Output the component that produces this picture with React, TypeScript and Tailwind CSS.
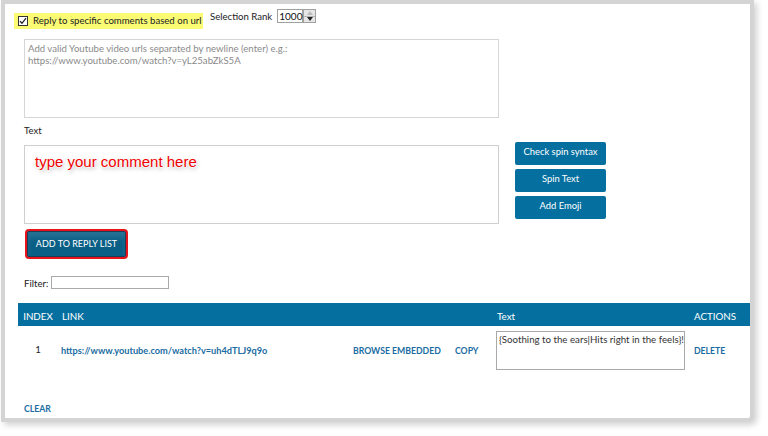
import React from "react";

const ui = { fontFamily: 'Lato, "Open Sans", sans-serif' };

function Check() {
  return (
    <span className="flex h-[10px] w-[10px] items-center justify-center border border-[#333] bg-white">
      <svg width="8" height="8" viewBox="0 0 8 8" fill="none" aria-hidden>
        <path d="M1 4.2 3 6.3 7 1.2" stroke="#222" strokeWidth="1.3" />
      </svg>
    </span>
  );
}

function Spinner() {
  return (
    <div className="flex h-[14px] w-[13px] flex-col border border-[#a0a0a0] bg-[#e6e6e6]">
      <div className="flex flex-1 items-center justify-center border-b border-[#b5b5b5]">
        <svg width="6" height="4" viewBox="0 0 6 4" aria-hidden>
          <path d="M0 4 3 0 6 4Z" fill="#bbb" />
        </svg>
      </div>
      <div className="flex flex-1 items-center justify-center">
        <svg width="6" height="4" viewBox="0 0 6 4" aria-hidden>
          <path d="M0 0 3 4 6 0Z" fill="#222" />
        </svg>
      </div>
    </div>
  );
}

const sideButtons = ["Check spin syntax", "Spin Text", "Add Emoji"];

export default function App() {
  return (
    <div className="h-[436px] w-[768px] overflow-hidden bg-white whitespace-nowrap" style={ui}>
      <div className="ml-[1px] h-[422px] w-[753px] rounded-br-[6px] border-4 border-[#d4d4d4] bg-white shadow-[3px_3px_6px_rgba(0,0,0,0.18)]">
        {/* top row */}
        <div className="flex items-start pl-[9px] pt-[5px]">
          <label className="mt-[4px] flex h-[16px] w-[189px] items-center gap-[5px] bg-[#fbfb74] pl-[4px] text-[9.6px] text-[#222]">
            <Check />
            Reply to specific comments based on url
          </label>
          <span className="ml-[7px] mt-[1px] text-[9.6px] text-[#222]">Selection Rank</span>
          <div className="ml-[5px] flex">
            <div className="flex h-[14px] w-[26px] items-center border border-[#a0a0a0] pl-[1px] text-[10px] text-[#111]">
              1000
            </div>
            <Spinner />
          </div>
        </div>

        <div className="pl-[19px]">
          <div className="mt-[10px] h-[79px] w-[475px] border border-[#d6d6d6] px-[3px] pt-[3px] text-[9.6px] leading-[12px] text-[#8a8a8a]">
            Add valid Youtube video urls separated by newline (enter) e.g.:
            <br />
            https://www.youtube.com/watch?v=yL25abZkS5A
          </div>

          <div className="mt-[7px] h-[12px] text-[9.6px] leading-[12px] text-[#222]">Text</div>

          <div className="mt-[8px] flex items-start gap-[16px]">
            <div className="h-[79px] w-[475px] border border-[#cfcfcf] pl-[10px] pt-[3px]">
              <span
                className="text-[15px] leading-[18px] text-[#f00000]"
                style={{
                  fontFamily: '"Liberation Sans", Arial, sans-serif',
                  textShadow:
                    "0 0 2px #fff, 0 0 2px #fff, 0 0 3px #fff, 1px 2px 4px rgba(0,0,0,0.35)",
                }}
              >
                type your comment here
              </span>
            </div>
            <div className="-mt-[3px] flex flex-col gap-[4px]">
              {sideButtons.map((b) => (
                <button
                  key={b}
                  className="flex h-[23px] w-[91px] items-center justify-center rounded-[2px] bg-[#05709f] pb-[3px] text-[9.4px] text-white"
                >
                  {b}
                </button>
              ))}
            </div>
          </div>

          <div className="ml-[1px] mt-[5px] flex h-[30px] w-[103px] items-center justify-center rounded-[4px] border-2 border-[#e8141c] bg-[#0a5f86] shadow-[inset_0_0_0_1px_#1b3d55,inset_0_6px_6px_rgba(255,255,255,0.12)]">
            <span className="text-[9px] text-white">ADD TO REPLY LIST</span>
          </div>

          <div className="mt-[17px] flex items-end gap-[3px]">
            <span className="text-[9.6px] leading-[11px] text-[#222]">Filter:</span>
            <div className="h-[13px] w-[118px] border border-[#a9a9a9]" />
          </div>
        </div>

        {/* table */}
        <div className="ml-[13px] mt-[14px]">
          <div className="grid h-[23px] grid-cols-[40px_292px_102px_41px_198px_1fr] items-center bg-[#05709f] pt-[4px] text-[9.8px] text-white">
            <span className="text-center">INDEX</span>
            <span className="pl-[4px]">LINK</span>
            <span />
            <span />
            <span className="pl-[4px]">Text</span>
            <span className="pl-[3px]">ACTIONS</span>
          </div>
          <div className="grid grid-cols-[40px_292px_102px_41px_198px_1fr] items-center py-[5px] text-[8.7px] text-[#1a6ca2]">
            <span className="text-center text-[9.6px] text-[#222]">1</span>
            <span className="pl-[3px] text-[9.2px] font-bold">https://www.youtube.com/watch?v=uh4dTLJ9q9o</span>
            <span className="pl-[3px] font-bold">BROWSE EMBEDDED</span>
            <span className="pl-[3px] font-bold">COPY</span>
            <div className="ml-[3px] h-[39px] w-[189px] border border-[#a9a9a9] px-[2px] pt-[1px] text-[9.7px] leading-[12px] text-[#333]">
              {"{Soothing to the ears|Hits right in the feels}!"}
            </div>
            <span className="pl-[3px] font-bold">DELETE</span>
          </div>
          <div className="mt-[27px] pl-[6px] text-[8.7px] font-bold text-[#1a6ca2]">CLEAR</div>
        </div>
      </div>
    </div>
  );
}
